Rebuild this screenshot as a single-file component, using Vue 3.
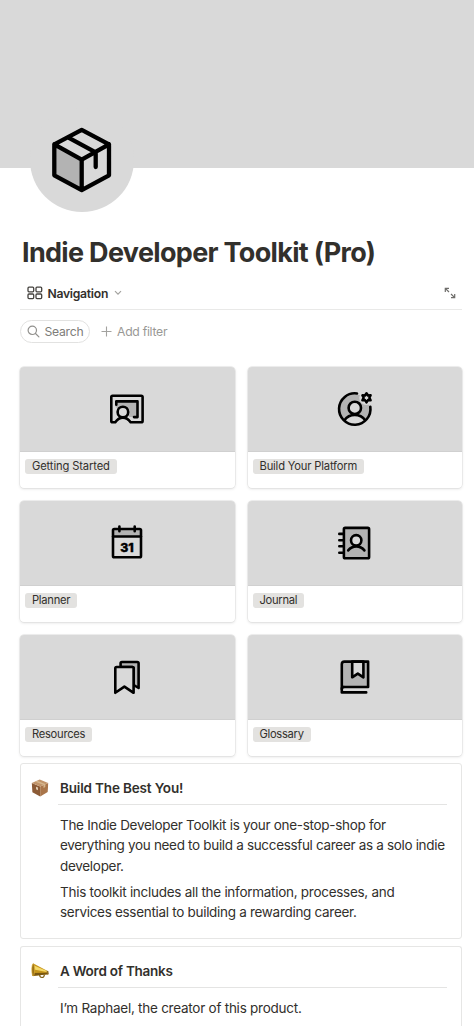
<script setup>
const cards = [
  { id: 'start', label: 'Getting Started' },
  { id: 'platform', label: 'Build Your Platform' },
  { id: 'planner', label: 'Planner' },
  { id: 'journal', label: 'Journal' },
  { id: 'resources', label: 'Resources' },
  { id: 'glossary', label: 'Glossary' },
]
</script>

<template>
  <main class="page">
    <header class="cover">
      <div class="badge">
        <svg width="104" height="104" viewBox="0 0 104 104" fill="none" stroke="#000" stroke-width="4.3" stroke-linejoin="round" stroke-linecap="round">
          <path d="M24.3 36.3 51.7 52V82L24.3 68Z" fill="#b3b3b3" stroke="none" />
          <path d="M51.7 21.8 79 36.3V67.3L51.7 82.2 24.3 67.3V36.3ZM24.3 36.3 51.7 51.7 79 36.3M51.7 51.7V82M38 29.3 65.7 44.3V59" />
        </svg>
      </div>
    </header>

    <h1>Indie Developer Toolkit (Pro)</h1>

    <nav class="tabs">
      <svg class="grid-icon" width="16" height="14" viewBox="0 0 16 14" fill="none" stroke="#45433f" stroke-width="1.3">
        <rect x="1" y="1.2" width="5.7" height="4.6" rx="1" /><rect x="9" y="1.2" width="5.7" height="4.6" rx="1" />
        <rect x="1" y="8" width="5.7" height="4.6" rx="1" /><rect x="9" y="8" width="5.7" height="4.6" rx="1" />
      </svg>
      <span class="tab-name">Navigation</span>
      <svg width="8" height="6" viewBox="0 0 8 6" fill="none" stroke="#a3a29f" stroke-width="1.2"><path d="m1 1.2 3 3 3-3" /></svg>
      <svg class="expand" width="12" height="12" viewBox="0 0 12 12" fill="none" stroke="#6f6e6b" stroke-width="1.2">
        <path d="M1.3 5V1.3H5M1.3 1.3 5 5M7 7l3.7 3.7M10.7 7v3.7H7" />
      </svg>
    </nav>

    <div class="filters">
      <span class="search">
        <svg width="13" height="13" viewBox="0 0 13 13" fill="none" stroke="#91908d" stroke-width="1.2" stroke-linecap="round"><circle cx="5.3" cy="5.3" r="4.2" /><path d="m8.5 8.5 3.4 3.4" /></svg>
        <span>Search</span>
      </span>
      <span class="add">
        <svg width="11" height="11" viewBox="0 0 11 11" stroke="#a3a29f" stroke-width="1.1"><path d="M5.5.5v10M.5 5.5h10" /></svg>
        <span>Add filter</span>
      </span>
    </div>

    <section class="gallery">
      <article v-for="card in cards" :key="card.id" class="card">
        <div class="preview">
          <svg width="40" height="40" viewBox="0 0 40 40" fill="none" stroke="#000" stroke-width="2.6" stroke-linejoin="round" stroke-linecap="round">
            <template v-if="card.id === 'start'">
              <path d="M8.6 12.4h22v15.7h-8l-14-10z" fill="#b3b3b3" stroke="none" />
              <path d="M8.3 33.2H5.6Q4.3 33.2 4.3 31.9V8Q4.3 6.7 5.6 6.7H34.2Q35.6 6.7 35.6 8V31.9Q35.6 33.2 34.2 33.2H23.6Q20.3 28.6 15.9 28.6T8.3 33.2Z" />
              <path d="M9.3 15.8V12.4H30.5V28.1H27" />
              <circle cx="15.9" cy="23" r="5.3" fill="#d9d9d9" />
            </template>
            <template v-else-if="card.id === 'platform'">
              <circle cx="19.8" cy="20" r="14.7" fill="#b3b3b3" stroke="none" />
              <path d="M9.2 31.4Q19.8 20.2 30.4 31.4Q26 35.6 19.8 35.6T9.2 31.4" fill="#d9d9d9" stroke="none" />
              <circle cx="31.5" cy="8.8" r="7.2" fill="#d9d9d9" stroke="none" />
              <path d="M22 4.5A15.7 15.7 0 1 0 35.3 17.8M9.2 31.4C14.5 24 25.1 24 30.4 31.4" />
              <circle cx="19.8" cy="18.9" r="6.2" fill="#d9d9d9" />
              <path d="m31.5 4.2 1.5 2.3 2.6-.2-1.2 2.5 1.2 2.5-2.6-.2-1.5 2.3-1.5-2.3-2.6.2 1.2-2.5-1.2-2.5 2.6.2Z" fill="#d9d9d9" stroke-width="2.5" />
            </template>
            <template v-else-if="card.id === 'planner'">
              <path d="M6 6h28v7.5H6z" fill="#b3b3b3" stroke="none" />
              <rect x="6" y="6" width="28" height="28.2" rx="1.3" />
              <path d="M6 13.5h28M12.4 3.6v4.7M27.7 3.6v4.7" />
              <text class="date" x="20" y="28.9" text-anchor="middle">31</text>
            </template>
            <template v-else-if="card.id === 'journal'">
              <rect x="8.9" y="4.9" width="25.2" height="30.4" rx="1.3" fill="#b3b3b3" />
              <path d="M4.3 10.9h4.5M4.3 17.2h4.5M4.3 23.3h4.5M4.3 29.7h4.5M13.2 27.4C17.4 22 25.2 22 29.4 27.4" />
              <circle cx="21.2" cy="17.3" r="5.2" fill="#d9d9d9" />
            </template>
            <template v-else-if="card.id === 'resources'">
              <path d="M13.6 10V6.3Q13.6 5 14.9 5H30.3Q31.6 5 31.6 6.3V31L26.7 28V11.3Q26.7 10 25.4 10Z" fill="#b3b3b3" />
              <path d="M8.3 35.8V11.3Q8.3 10 9.6 10H25.3Q26.6 10 26.6 11.3V35.8L17.4 29.6Z" fill="#d9d9d9" />
            </template>
            <template v-else>
              <path d="M6.8 32V7.2Q6.8 4.6 9.4 4.6H33.1V30H8.6" fill="#b3b3b3" />
              <path d="M31.2 35.4H6.8V32Q6.8 30 8.8 30" />
              <path d="M17.2 4.6V20.3L22.8 16.6 28.4 20.3V4.6Z" fill="#d9d9d9" />
            </template>
          </svg>
        </div>
        <div class="caption"><span class="tag" :class="card.id">{{ card.label }}</span></div>
      </article>
    </section>

    <section class="callout first">
      <svg class="emoji" width="18" height="18" viewBox="0 0 18 18">
        <path d="m.8 4 8.4 3.4v10L1.4 13.2Z" fill="#8c5b36" /><path d="m9.2 7.4 8-3.4-.5 9-7.5 4.4Z" fill="#a9754a" />
        <path d="M.8 4 8.7.6 17.2 4l-8 3.4Z" fill="#c1946a" /><path d="m4 2.6 8.5 3.3v3l1.8-.9V5L6 1.7Z" fill="#d5b68d" /><path d="m5 7.8 2 .8v2.7l-2-1Z" fill="#e0cbb1" />
      </svg>
      <div class="body">
        <h2>Build The Best You!</h2>
        <p><span class="l1">The Indie Developer Toolkit is your one-stop-shop for</span><br /><span class="l2">everything you need to build a successful career as a solo indie</span><br /><span class="l1">developer.</span></p>
        <p><span class="l4">This toolkit includes all the information, processes, and</span><br /><span class="l5">services essential to building a rewarding career.</span></p>
      </div>
    </section>

    <section class="callout second">
      <svg class="emoji" width="18" height="18" viewBox="0 0 18 18">
        <path d="M8.5 12.5q.2 3 2.4 3t2.5-2.8" fill="none" stroke="#806016" stroke-width="1.2" />
        <path d="M2.4 1.6 16.6 9l.6 3.3L1.5 14Z" fill="#c6951b" /><path d="M3 3.6 16.5 9.3l-.8.8L3 7.6Z" fill="#f4d968" />
        <path d="m2 11 15-.3.2 1.6L1.5 14Z" fill="#795611" /><ellipse cx="2.2" cy="7.8" rx="1.4" ry="6.2" fill="#9c7218" stroke="#e0b438" stroke-width=".6" />
        <path d="m15.5 8.8 1.8.2.5 3.2-1.6.3Z" fill="#8e6b24" />
      </svg>
      <div class="body">
        <h2 class="thanks">A Word of Thanks</h2>
        <p><span class="l6">I’m Raphael, the creator of this product.</span></p>
      </div>
    </section>
  </main>
</template>

<style>
body { background: #fff; }
</style>

<style scoped>
* { box-sizing: border-box; }
.page { height: 1026px; overflow: hidden; background: #fff; color: #32302c; font-family: Inter, "Liberation Sans", sans-serif; }
svg { display: block; flex: none; }
.cover { height: 168px; padding: 108px 0 0 30px; background: #d9d9d9; }
.badge { width: 104px; height: 104px; border-radius: 50%; background: #d9d9d9; }
h1 { margin: 67px 0 0 22px; font-size: 27px; line-height: 36px; font-weight: 700; letter-spacing: -0.68px; white-space: nowrap; }
.tabs { display: flex; align-items: center; height: 33px; margin: 6px 12px 0 20px; padding: 0 6px 0 6.5px; border-bottom: 1px solid #e9e9e8; }
.tab-name { margin: 0 6px 0 5px; font-size: 12.2px; font-weight: 600; letter-spacing: -.28px; }
.expand { margin-left: auto; }
.filters { display: flex; align-items: center; height: 43px; padding-left: 20px; font-size: 12.2px; gap: 11px; letter-spacing: -.27px; }
.search, .add { display: flex; align-items: center; gap: 5px; white-space: nowrap; }
.search { width: 70px; height: 23px; padding-left: 6px; gap: 4.5px; border: 1px solid #e2e2e1; border-radius: 12px; color: #7d7c79; }
.add { color: #999895; }
.gallery { display: grid; grid-template-columns: 1fr 1fr; gap: 13.2px 13px; margin: 14px 12px 0 20px; }
.card { height: 121px; overflow: hidden; border-radius: 4px; background: #fff; box-shadow: 0 0 0 .5px #dededd, 0 1px 3px #00000020; }
.preview { display: flex; align-items: center; justify-content: center; height: 85px; background: #d9d9d9; border-bottom: 1px solid #d0d0d0; }
.date { fill: #000; stroke: #000; stroke-width: .4px; font-size: 12.3px; font-weight: 800; letter-spacing: .1px; }
.caption { padding: 7px 0 0 5px; }
.tag { display: block; width: max-content; height: 15px; padding: 0 7px; border-radius: 3px; background: #e3e2e0; font-size: 11.2px; line-height: 15px; white-space: nowrap; letter-spacing: -.28px; }
.tag.start { letter-spacing: -.13px; }
.tag.platform { letter-spacing: -.18px; }
.tag.journal, .tag.glossary { letter-spacing: -.3px; }
.callout { display: flex; margin: 0 12px 0 20px; padding: 0 14px 0 10px; border: 1px solid #e6e6e5; border-radius: 3px; }
.first { height: 176px; margin-top: 6.6px; }
.second { height: 100px; margin-top: 7px; border-bottom: 0; }
.emoji { margin-top: 15px; }
.body { flex: 1; min-width: 0; margin-left: 9px; }
h2 { height: 41px; margin: 0 0 10px; padding: 14px 0 0 2px; border-bottom: 1px solid #e4e4e3; font-size: 13.5px; line-height: 20px; font-weight: 600; letter-spacing: -.16px; white-space: nowrap; }
.thanks { letter-spacing: -.24px; }
p { margin: 0 0 6px; padding-left: 2px; font-size: 13.5px; line-height: 20.3px; white-space: nowrap; }
.l1, .l5 { letter-spacing: -.3px; }
.l2 { letter-spacing: -.325px; }
.l4 { letter-spacing: -.28px; }
.l6 { letter-spacing: -.25px; }
</style>
